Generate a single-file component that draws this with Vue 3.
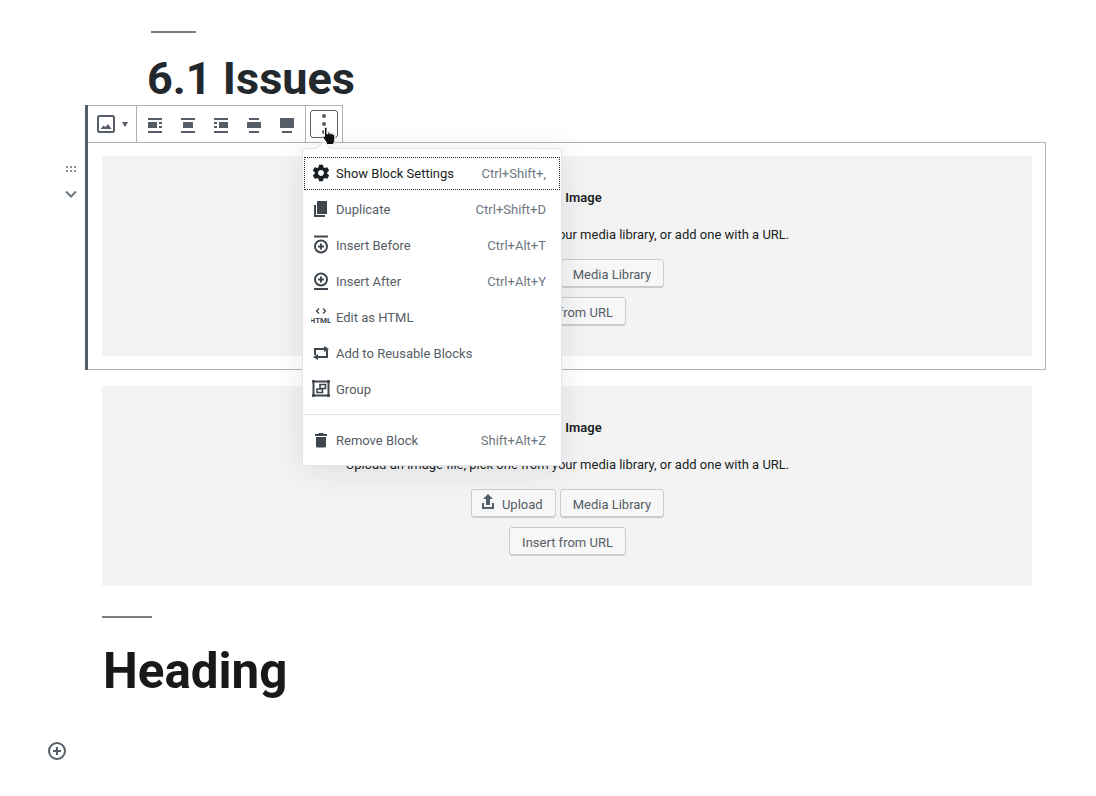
<script setup>
const items = [
  { id: 'gear', label: 'Show Block Settings', key: 'Ctrl+Shift+,', focus: true },
  { id: 'dup', label: 'Duplicate', key: 'Ctrl+Shift+D' },
  { id: 'before', label: 'Insert Before', key: 'Ctrl+Alt+T' },
  { id: 'after', label: 'Insert After', key: 'Ctrl+Alt+Y' },
  { id: 'html', label: 'Edit as HTML', key: '' },
  { id: 'reuse', label: 'Add to Reusable Blocks', key: '' },
  { id: 'group', label: 'Group', key: '' }
]
</script>

<template>
  <div class="page">
    <main class="content">
      <div class="rule rule-title"></div>
      <h1 class="title">6.1 Issues</h1>

      <section class="block">
        <div class="placeholder">
          <div class="ph-label">
            <svg class="ph-icon" width="20" height="20" viewBox="0 0 24 24"><path fill="#191e23" d="M19 4H5c-1.100 0-2 .9-2 2v12c0 1.100.9 2 2 2h14c1.100 0 2-.9 2-2V6c0-1.100-.9-2-2-2zm0 14H5V6h14v12zM6 17l3-4 2 2 3-4 4 6z"/></svg>
            <span>Image</span>
          </div>
          <p class="ph-text">Upload an image file, pick one from your media library, or add one with a URL.</p>
          <div class="ph-actions">
            <button class="btn">
              <svg width="20" height="20" viewBox="0 0 20 20"><path fill="#555d66" d="M10 2l5 5h-3v6H8V7H5zM4 11h2v4h8v-4h2v6H4z"/></svg>
              <span>Upload</span>
            </button>
            <button class="btn">Media Library</button>
            <button class="btn">Insert from URL</button>
          </div>
        </div>

        <div class="mover">
          <svg width="12" height="6" viewBox="0 0 12 6"><g fill="#8a9299"><rect x="0" y="0" width="2" height="2"/><rect x="4" y="0" width="2" height="2"/><rect x="8" y="0" width="2" height="2"/><rect x="0" y="4" width="2" height="2"/><rect x="4" y="4" width="2" height="2"/><rect x="8" y="4" width="2" height="2"/></g></svg>
          <svg width="14" height="8" viewBox="0 0 14 8"><path d="M1 1.500l5 5 5-5" fill="none" stroke="#6c7781" stroke-width="2"/></svg>
        </div>

        <div class="toolbar">
          <div class="tb-group tb-switch">
            <svg width="22" height="22" viewBox="0 0 22 22">
              <rect x="3" y="3" width="16" height="16" rx="1.500" fill="none" stroke="#555d66" stroke-width="2"/>
              <path fill="#555d66" d="M5.500 16l3-3.500 2 1.500 2.500-3 3.500 5z"/>
            </svg>
            <span class="caret"></span>
          </div>
          <div class="tb-group tb-align">
            <svg width="14" height="16" viewBox="0 0 14 16"><g fill="#555d66"><rect y="0" width="14" height="2"/><rect y="4" width="9" height="6"/><rect x="11" y="4" width="3" height="2"/><rect x="11" y="8" width="3" height="2"/><rect y="13" width="14" height="2"/></g></svg>
            <svg width="14" height="16" viewBox="0 0 14 16"><g fill="#555d66"><rect y="0" width="14" height="2"/><rect x="2" y="4" width="10" height="6"/><rect y="13" width="14" height="2"/></g></svg>
            <svg width="14" height="16" viewBox="0 0 14 16"><g fill="#555d66"><rect y="0" width="14" height="2"/><rect x="5" y="4" width="9" height="6"/><rect y="4" width="3" height="2"/><rect y="8" width="3" height="2"/><rect y="13" width="14" height="2"/></g></svg>
            <svg width="14" height="16" viewBox="0 0 14 16"><g fill="#555d66"><rect x="2" y="0" width="10" height="2"/><rect y="4" width="14" height="6"/><rect x="2" y="13" width="10" height="2"/></g></svg>
            <svg width="14" height="16" viewBox="0 0 14 16"><g fill="#555d66"><rect y="0" width="14" height="10"/><rect x="2" y="13" width="10" height="2"/></g></svg>
          </div>
          <div class="tb-group tb-more">
            <div class="kebab">
              <i></i><i></i><i></i>
            </div>
          </div>
          <svg class="hand" width="16" height="20" viewBox="0 0 16 20">
            <path fill="#111" stroke="#fff" stroke-width="1" d="M4 1.500c.9-.6 2 0 2 1v5.500l1-.3V6.500c0-1 1.700-1 1.900 0l.1 1.300 1-.1c.4-.8 1.700-.6 1.900.4l.1.700c.6-.5 1.700-.2 1.800.8v4.400c0 1.300-.4 2.200-1 3v1.500H5.500v-1.500C4.500 15 3.300 13.500 2 12c-.8-1-.3-2 .8-1.800l.7.300V2.500c0-.4.200-.8.500-1z"/>
          </svg>
        </div>

        <div class="popover">
          <span class="arrow"></span>
          <ul class="menu">
            <li v-for="item in items" :key="item.id" class="item" :class="{ focus: item.focus }">
              <svg v-if="item.id === 'gear'" width="20" height="20" viewBox="0 0 24 24"><path fill="#191e23" d="M19.430 12.980c.04-.32.07-.64.07-.98s-.03-.66-.07-.98l2.110-1.650c.19-.15.24-.42.12-.64l-2-3.460c-.12-.22-.39-.3-.61-.22l-2.490 1c-.52-.4-1.080-.73-1.690-.98l-.38-2.650C14.460 2.180 14.250 2 14 2h-4c-.25 0-.46.18-.49.42l-.38 2.650c-.61.25-1.170.59-1.690.98l-2.490-1c-.23-.09-.49 0-.61.22l-2 3.460c-.13.22-.07.49.12.64l2.110 1.650c-.04.32-.07.65-.07.98s.03.66.07.98l-2.110 1.650c-.19.15-.24.42-.12.64l2 3.460c.12.22.39.3.61.22l2.490-1c.52.4 1.080.73 1.690.98l.38 2.650c.03.24.24.42.49.42h4c.25 0 .46-.18.49-.42l.38-2.650c.61-.25 1.170-.59 1.690-.98l2.490 1c.23.09.49 0 .61-.22l2-3.460c.12-.22.07-.49-.12-.64l-2.110-1.650zM12 15.500c-1.930 0-3.500-1.570-3.500-3.500s1.570-3.500 3.500-3.500 3.500 1.570 3.500 3.500-1.570 3.500-3.500 3.500z"/></svg>
              <svg v-else-if="item.id === 'dup'" width="20" height="20" viewBox="0 0 20 20"><g fill="#3f464d"><rect x="6" y="2" width="10" height="13"/><path d="M3 6h2v10h9v2H3z"/></g></svg>
              <svg v-else-if="item.id === 'before'" width="20" height="20" viewBox="0 0 20 20"><rect x="3" y="0.500" width="14" height="2" fill="#3f464d"/><circle cx="10" cy="11.500" r="6" fill="none" stroke="#3f464d" stroke-width="2"/><path d="M7 11.500h6M10 8.500v6" stroke="#3f464d" stroke-width="2"/></svg>
              <svg v-else-if="item.id === 'after'" width="20" height="20" viewBox="0 0 20 20"><rect x="3" y="17" width="14" height="2" fill="#3f464d"/><circle cx="10" cy="8.500" r="6" fill="none" stroke="#3f464d" stroke-width="2"/><path d="M7 8.500h6M10 5.500v6" stroke="#3f464d" stroke-width="2"/></svg>
              <svg v-else-if="item.id === 'html'" width="20" height="20" viewBox="0 0 20 20"><path d="M8 1.500L5.500 4 8 6.500M12 1.500L14.500 4 12 6.500" fill="none" stroke="#3f464d" stroke-width="1.300"/><text x="9.500" y="16" text-anchor="middle" class="html-text">HTML</text></svg>
              <svg v-else-if="item.id === 'reuse'" width="20" height="20" viewBox="0 0 20 20"><g fill="none" stroke="#3f464d" stroke-width="2"><path d="M14 6H4v6"/><path d="M6 14h10V7"/></g><g fill="#3f464d"><path d="M13 3l5 3-5 3z"/><path d="M7 11l-5 3 5 3z"/></g></svg>
              <svg v-else-if="item.id === 'group'" width="20" height="20" viewBox="0 0 20 20"><g fill="none" stroke="#3f464d" stroke-width="2"><rect x="2.500" y="2.500" width="15" height="14"/><path d="M9 5.500h5.500v4H9zM6 10h5.500v3.500H6z" stroke-width="1.600"/></g><g fill="#3f464d"><rect x="1" y="1" width="3" height="3" rx="1"/><rect x="16" y="1" width="3" height="3" rx="1"/><rect x="1" y="15" width="3" height="3" rx="1"/><rect x="16" y="15" width="3" height="3" rx="1"/></g></svg>
              <span class="item-label">{{ item.label }}</span>
              <span v-if="item.key" class="item-key">{{ item.key }}</span>
            </li>
            <li class="sep"></li>
            <li class="item">
              <svg width="20" height="20" viewBox="0 0 20 20"><path fill="#3f464d" d="M8 3h4l1 1h3v2H4V4h3zM5 7h10v9c0 .8-.6 1.500-1.500 1.500h-7C5.700 17.500 5 16.800 5 16z"/></svg>
              <span class="item-label">Remove Block</span>
              <span class="item-key">Shift+Alt+Z</span>
            </li>
          </ul>
        </div>
      </section>

      <div class="placeholder second">
        <div class="ph-label">
          <svg class="ph-icon" width="20" height="20" viewBox="0 0 24 24"><path fill="#191e23" d="M19 4H5c-1.100 0-2 .9-2 2v12c0 1.100.9 2 2 2h14c1.100 0 2-.9 2-2V6c0-1.100-.9-2-2-2zm0 14H5V6h14v12zM6 17l3-4 2 2 3-4 4 6z"/></svg>
          <span>Image</span>
        </div>
        <p class="ph-text">Upload an image file, pick one from your media library, or add one with a URL.</p>
        <div class="ph-actions">
          <button class="btn">
            <svg width="20" height="20" viewBox="0 0 20 20"><path fill="#555d66" d="M10 2l5 5h-3v6H8V7H5zM4 11h2v4h8v-4h2v6H4z"/></svg>
            <span>Upload</span>
          </button>
          <button class="btn">Media Library</button>
          <button class="btn">Insert from URL</button>
        </div>
      </div>

      <div class="rule rule-heading"></div>
      <h2 class="heading">Heading</h2>

      <svg class="inserter" width="20" height="20" viewBox="0 0 20 20">
        <circle cx="10" cy="10" r="8" fill="none" stroke="#555d66" stroke-width="2"/>
        <path d="M6 10h8M10 6v8" stroke="#555d66" stroke-width="2"/>
      </svg>
    </main>
  </div>
</template>

<style>
html, body { margin: 0; background: #fff; }
</style>

<style scoped>
.page {
  width: 1096px;
  height: 796px;
  overflow: hidden;
  background: #fff;
  font-family: Roboto, "Liberation Sans", sans-serif;
  font-size: 13px;
  color: #191e23;
}
.content {
  position: relative;
  box-sizing: border-box;
  width: 930px;
  margin-left: 102px;
  padding-top: 31px;
}
.rule { height: 2px; background: #7c7c7c; }
.rule-title { width: 45px; margin-left: 49px; }
.rule-heading { width: 50px; margin-top: 30px; }
.title {
  margin: 0 0 0 45px;
  height: 109px;
  box-sizing: border-box;
  padding-top: 17px;
  font-size: 45px;
  line-height: 58px;
  font-weight: 700;
  color: #23282d;
}
.block {
  position: relative;
  margin: 0 -14px 16px -15px;
  padding: 13px 13px 13px 15px;
  height: 228px;
  box-sizing: border-box;
  border: 1px solid #b0b3b6;
  border-left: none;
}
.placeholder {
  box-sizing: border-box;
  height: 200px;
  padding-top: 33px;
  padding-left: 1px;
  background: #f3f3f4;
  display: flex;
  flex-direction: column;
  align-items: center;
}
.ph-label {
  display: flex;
  align-items: center;
  height: 18px;
  line-height: 18px;
  font-weight: 600;
  font-size: 13px;
  margin-bottom: 19px;
}
.ph-icon { margin-right: 12px; }
.ph-text {
  margin: 0 0 15px;
  height: 18px;
  line-height: 18px;
  font-size: 13px;
  color: #191e23;
}
.ph-actions {
  display: flex;
  flex-wrap: wrap;
  justify-content: center;
  gap: 9px 4px;
  width: 300px;
}
.btn {
  display: inline-flex;
  align-items: center;
  gap: 4px;
  box-sizing: border-box;
  height: 29px;
  padding: 2px 12px 0;
  font-family: inherit;
  font-size: 13px;
  color: #555d66;
  background: #f7f7f7;
  border: 1px solid #ccc;
  border-radius: 3px;
  box-shadow: inset 0 -1px 0 #ccc;
}
.btn svg { margin-left: -6px; margin-top: -6px; }
.mover {
  position: absolute;
  left: -22px;
  top: 23px;
  width: 14px;
  display: flex;
  flex-direction: column;
  align-items: center;
  gap: 18px;
}
.toolbar {
  position: absolute;
  left: -2px;
  top: -38px;
  width: 258px;
  height: 38px;
  box-sizing: border-box;
  display: flex;
  background: #fff;
  border: 1px solid #b0b3b6;
  border-left: none;
}
.toolbar::before {
  content: "";
  position: absolute;
  left: 0;
  top: -1px;
  width: 3px;
  height: 265px;
  background: #555d66;
}
.tb-group {
  display: flex;
  align-items: center;
  box-sizing: border-box;
}
.tb-switch {
  width: 52px;
  gap: 2px;
  border-right: 1px solid #b0b3b6;
  padding-left: 10px;
}
.caret {
  width: 0;
  height: 0;
  margin-left: 3px;
  border-left: 3px solid transparent;
  border-right: 3px solid transparent;
  border-top: 5px solid #555d66;
}
.tb-align {
  width: 169px;
  padding-left: 11px;
  gap: 19px;
  border-right: 1px solid #b0b3b6;
}
.tb-align svg { margin-top: 3px; }
.tb-more { padding-left: 4px; }
.kebab {
  box-sizing: border-box;
  width: 28px;
  height: 28px;
  border: 1px solid #555d66;
  border-radius: 3px;
  display: flex;
  flex-direction: column;
  align-items: center;
  justify-content: center;
  gap: 4px;
}
.kebab i {
  display: block;
  width: 4px;
  height: 4px;
  border-radius: 50%;
  background: #555d66;
}
.hand {
  position: absolute;
  left: 236px;
  top: 20px;
}
.popover {
  position: absolute;
  left: 215px;
  top: 5px;
  width: 260px;
  height: 318px;
  box-sizing: border-box;
  background: #fff;
  border: 1px solid #e2e4e7;
  box-shadow: 0 3px 30px rgba(25, 30, 35, 0.1);
  z-index: 2;
}
.arrow {
  position: absolute;
  left: 15px;
  top: -6px;
  width: 10px;
  height: 10px;
  background: #fff;
  border-left: 1px solid #e2e4e7;
  border-top: 1px solid #e2e4e7;
  transform: rotate(45deg);
}
.menu {
  list-style: none;
  margin: 0;
  padding: 6px 0 0;
  position: relative;
}
.item {
  display: flex;
  align-items: center;
  box-sizing: border-box;
  height: 36px;
  padding: 0 15px 0 8px;
  color: #555d66;
}
.item-label { margin-left: 5px; flex: 1; }
.item-key { color: #6c7781; }
.item.focus {
  position: relative;
  color: #191e23;
}
.item.focus::after {
  content: "";
  position: absolute;
  left: 1px;
  top: 2px;
  width: 256px;
  height: 33px;
  box-sizing: border-box;
  border: 1px dotted #23282d;
}
.sep {
  height: 1px;
  margin: 7px 0 7px;
  background: #e2e4e7;
}
.html-text {
  font-family: Roboto, "Liberation Sans", sans-serif;
  font-size: 8px;
  font-weight: 700;
  fill: #3f464d;
}
.heading {
  margin: 0 0 0 1px;
  padding-top: 20px;
  font-size: 49.300px;
  line-height: 66px;
  font-weight: 700;
  color: #191919;
}
.inserter {
  position: absolute;
  left: -55px;
  top: 741px;
}
</style>
